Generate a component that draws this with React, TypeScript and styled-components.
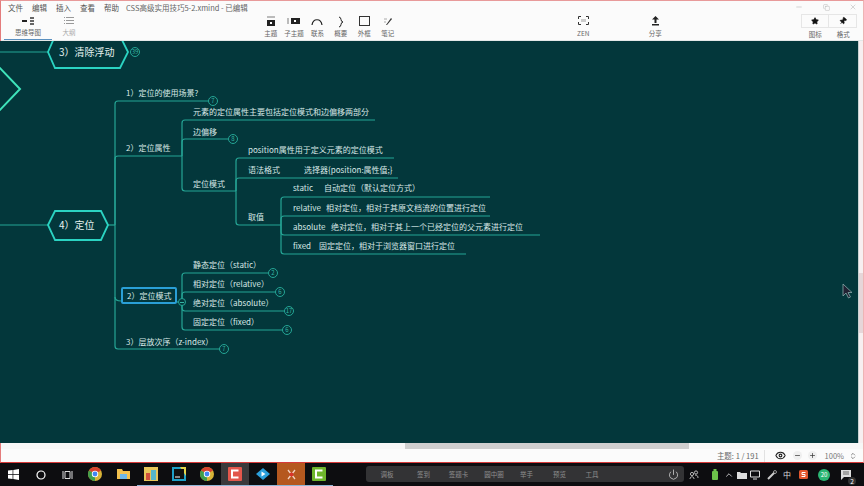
import React from 'react';
import styled, { createGlobalStyle } from 'styled-components';
import { Star, Pin, Eye, Power, ChevronUp, ChevronsUpDown, Minus, Plus, X, Copy } from 'lucide-react';

const CJK = `"Noto Sans CJK SC", "Noto Sans", sans-serif`;
const CANVAS_BG = '#03373b';

const lines = [
  'M0 225H48', 'M0 52H48', 'M108 225H115',
  'M115 225V104Q115 101 118 101H209',
  'M115 225V159Q115 156 118 156H182',
  'M115 225V346Q115 349 118 349H220',
  'M115 297Q115 301 121 301',
  'M182 156V123Q182 120 185 120H375',
  'M182 156V142Q182 139 185 139H228',
  'M182 156V188Q182 191 185 191H236',
  'M236 191V161Q236 158 239 158H394',
  'M236 191V181Q236 178 239 178H398',
  'M236 191V222Q236 225 239 225H281',
  'M281 225V200Q281 197 284 197H490',
  'M281 225V219Q281 216 284 216H490',
  'M281 225V232Q281 235 284 235H540',
  'M281 225V251Q281 254 284 254H466',
  'M177 302H182',
  'M182 302V276Q182 273 185 273H268',
  'M182 302V295Q182 292 185 292H276',
  'M182 302V308Q182 311 185 311H285',
  'M182 302V327Q182 330 185 330H283',
];

const labels = [
  { x: 126, y: 93, text: '1）定位的使用场景?' },
  { x: 126, y: 148, text: '2）定位属性' },
  { x: 126, y: 342, text: '3）层放次序（z-index）' },
  { x: 193, y: 112, text: '元素的定位属性主要包括定位模式和边偏移两部分' },
  { x: 193, y: 132, text: '边偏移' },
  { x: 193, y: 184, text: '定位模式' },
  { x: 248, y: 150, text: 'position属性用于定义元素的定位模式' },
  { x: 248, y: 170, text: '语法格式' },
  { x: 304, y: 170, text: '选择器{position:属性值;}' },
  { x: 248, y: 217, text: '取值' },
  { x: 293, y: 188, text: 'static' },
  { x: 324, y: 188, text: '自动定位（默认定位方式）' },
  { x: 293, y: 208, text: 'relative' },
  { x: 326, y: 208, text: '相对定位，相对于其原文档流的位置进行定位' },
  { x: 293, y: 227, text: 'absolute' },
  { x: 331, y: 227, text: '绝对定位，相对于其上一个已经定位的父元素进行定位' },
  { x: 293, y: 246, text: 'fixed' },
  { x: 319, y: 246, text: '固定定位，相对于浏览器窗口进行定位' },
  { x: 193, y: 265, text: '静态定位（static）' },
  { x: 193, y: 284, text: '相对定位（relative）' },
  { x: 193, y: 303, text: '绝对定位（absolute）' },
  { x: 193, y: 322, text: '固定定位（fixed）' },
];

const badges = [
  { x: 135, y: 52, n: '39' },
  { x: 213, y: 101, n: '7' },
  { x: 233, y: 139, n: '8' },
  { x: 273, y: 273, n: '2' },
  { x: 280, y: 292, n: '6' },
  { x: 289, y: 311, n: '17' },
  { x: 287, y: 330, n: '6' },
  { x: 224, y: 349, n: '7' },
];

const App: React.FC = () => {
  return (
    <>
      <GlobalStyle />
      <Page>
        <Window>
          <MenuBar>
            <MenuItem>文件</MenuItem>
            <MenuItem>编辑</MenuItem>
            <MenuItem>插入</MenuItem>
            <MenuItem>查看</MenuItem>
            <MenuItem>帮助</MenuItem>
            <DocTitle>CSS高级实用技巧5-2.xmind - 已编辑</DocTitle>
            <WindowControls>
              <Minus size={8} strokeWidth={1} />
              <Copy size={7} strokeWidth={1} />
              <X size={8} strokeWidth={1} />
            </WindowControls>
          </MenuBar>

          <Toolbar>
            <ViewTab $active>
              <svg width="14" height="10" viewBox="0 0 14 10">
                <path d="M1 4h5v2H1z" fill="#222" />
                <path d="M9 1h4v2H9zM9 4h4v2H9zM9 7h4v2H9z" fill="#666" />
              </svg>
              思维导图
            </ViewTab>
            <ViewTab>
              <svg width="12" height="10" viewBox="0 0 12 10">
                <path d="M1 1h1v1H1zM1 4h1v1H1zM1 7h1v1H1zM3 1h8v1H3zM3 4h8v1H3zM3 7h8v1H3z" fill="#999" />
              </svg>
              大纲
            </ViewTab>

            <ToolGroup>
              <ToolButton>
                <svg width="12" height="11" viewBox="0 0 12 11">
                  <path d="M2 0h8v2H2z" fill="#bbb" />
                  <path d="M2 4h8v6H2z" fill="#222" />
                  <path d="M5 6h2v2H5z" fill="#fff" />
                </svg>
                主题
              </ToolButton>
              <ToolButton>
                <svg width="14" height="10" viewBox="0 0 14 10">
                  <path d="M0 2h2v6H0z" fill="#bbb" />
                  <path d="M4 2h9v6H4z" fill="#222" />
                  <path d="M7 4h2v2H7z" fill="#fff" />
                </svg>
                子主题
              </ToolButton>
              <ToolButton>
                <svg width="12" height="10" viewBox="0 0 12 10">
                  <path d="M1 9C2 2 10 2 11 9" fill="none" stroke="#222" strokeWidth="1.2" />
                </svg>
                联系
              </ToolButton>
              <ToolButton>
                <svg width="8" height="12" viewBox="0 0 8 12">
                  <path d="M2 1C5 1 3 6 6 6C3 6 5 11 2 11" fill="none" stroke="#222" strokeWidth="1" />
                </svg>
                概要
              </ToolButton>
              <ToolButton>
                <svg width="11" height="10" viewBox="0 0 11 10">
                  <rect x="0.5" y="0.5" width="10" height="9" fill="none" stroke="#333" />
                </svg>
                外框
              </ToolButton>
              <ToolButton>
                <svg width="10" height="10" viewBox="0 0 10 10">
                  <path d="M1 3h3M1 6h2" stroke="#aaa" />
                  <path d="M3 9L8 2l1 1-5 6z" fill="#333" />
                </svg>
                笔记
              </ToolButton>
            </ToolGroup>

            <ZenButton>
              <svg width="11" height="9" viewBox="0 0 11 9">
                <path d="M0.5 3V0.5H3M8 0.5h2.5V3M10.5 6v2.5H8M3 8.5H0.5V6" fill="none" stroke="#333" />
                <rect x="3" y="3" width="5" height="3" fill="#ccc" />
              </svg>
              ZEN
            </ZenButton>
            <ShareButton>
              <svg width="9" height="10" viewBox="0 0 9 10">
                <path d="M4.5 0L8 3.5H5.5V7h-2V3.5H1zM1 8h7v1.5H1z" fill="#222" />
              </svg>
              分享
            </ShareButton>

            <SidePanel>
              <SideButton>
                <SideIcon><Star size={8} fill="#111" color="#111" /></SideIcon>
                <SideLabel>图标</SideLabel>
              </SideButton>
              <SideButton>
                <SideIcon $last><Pin size={8} fill="#111" color="#111" style={{ transform: 'rotate(40deg)' }} /></SideIcon>
                <SideLabel>格式</SideLabel>
              </SideButton>
            </SidePanel>
          </Toolbar>

          <Workspace>
            <Canvas>
              <Connectors viewBox="0 41 858 402" width="858" height="402">
                {lines.map((d) => (
                  <path key={d} d={d} fill="none" stroke="#25a595" strokeWidth="1.2" />
                ))}
                <path d="M-2 66L20 89L-2 112" fill="none" stroke="#3fe3ba" strokeWidth="2" />
                <path d="M48 52L55 36H120L128 52L120 68H55Z" fill={CANVAS_BG} stroke="#2bd3c2" strokeWidth="1.8" />
                <path d="M48 225L55 211H101L108 225L101 240H55Z" fill={CANVAS_BG} stroke="#2bd3c2" strokeWidth="1.8" />
              </Connectors>

              <HexLabel $x={59} $y={52}>3）清除浮动</HexLabel>
              <HexLabel $x={59} $y={225}>4）定位</HexLabel>

              {labels.map((l) => (
                <Label key={l.text} $x={l.x} $y={l.y}>{l.text}</Label>
              ))}
              {badges.map((b) => (
                <Badge key={`${b.x}-${b.y}`} $x={b.x} $y={b.y}>{b.n}</Badge>
              ))}

              <SelectedNode>2）定位模式</SelectedNode>
              <Collapse />
            </Canvas>
            <VerticalScroll>
              <VerticalThumb />
            </VerticalScroll>
          </Workspace>

          <HorizontalScroll>
            <HorizontalThumb />
          </HorizontalScroll>

          <StatusBar>
            <StatusText>主题: 1 / 191</StatusText>
            <StatusDivider />
            <EyeSlot><Eye size={11} color="#222" strokeWidth={2.4} /></EyeSlot>
            <ZoomCircle><Minus size={7} color="#333" strokeWidth={2.4} /></ZoomCircle>
            <ZoomCircle><Plus size={7} color="#333" strokeWidth={2.4} /></ZoomCircle>
            <ZoomValue>100%</ZoomValue>
            <ChevronsUpDown size={8} color="#555" />
          </StatusBar>
        </Window>

        <Taskbar>
          <SystemButton>
            <svg width="11" height="11" viewBox="0 0 11 11">
              <path d="M0 1.6L4.6 1V5.2H0zM5.3 0.9L11 0V5.2H5.3zM0 5.9H4.6V10L0 9.4zM5.3 5.9H11V11L5.3 10.1z" fill="#fff" />
            </svg>
          </SystemButton>
          <SystemButton>
            <svg width="10" height="10" viewBox="0 0 10 10">
              <circle cx="5" cy="5" r="4" fill="none" stroke="#fff" strokeWidth="1.2" />
            </svg>
          </SystemButton>
          <SystemButton>
            <svg width="11" height="10" viewBox="0 0 11 10">
              <path d="M3 1.5h5v7H3zM1 1v8M10 1v8" fill="none" stroke="#ddd" />
            </svg>
          </SystemButton>

          <AppButton><ChromeIcon /></AppButton>
          <AppButton>
            <svg width="13" height="12" viewBox="0 0 13 12">
              <path d="M0 1h5l1 2h7v8H0z" fill="#f2c14e" />
              <path d="M3 6h7v5H3z" fill="#6db7e8" />
            </svg>
          </AppButton>
          <AppButton $running>
            <svg width="14" height="14" viewBox="0 0 14 14">
              <rect width="14" height="14" fill="#e8c65a" />
              <rect x="2" y="6" width="4" height="7" fill="#d0503c" />
              <rect x="7" y="3" width="5" height="10" fill="#55b6c9" />
            </svg>
          </AppButton>
          <AppButton $running>
            <svg width="14" height="14" viewBox="0 0 14 14">
              <path d="M0 0h14v14H0z" fill="#1ea0c8" />
              <path d="M8 0h6v9z" fill="#e4d44a" />
              <rect x="2" y="2" width="10" height="10" fill="#111" />
              <rect x="3" y="9.5" width="5" height="1" fill="#fff" />
            </svg>
          </AppButton>
          <AppButton $running><ChromeIcon /></AppButton>
          <AppButton $running $bg="#3a3a3c">
            <svg width="14" height="14" viewBox="0 0 14 14">
              <rect width="14" height="14" rx="1" fill="#e2574c" />
              <path d="M10.5 3.5H4v7h6.5" fill="none" stroke="#fff" strokeWidth="2" />
            </svg>
          </AppButton>
          <AppButton $running>
            <svg width="14" height="12" viewBox="0 0 14 12">
              <path d="M7 0L14 6L7 12L0 6Z" fill="#2c9fdc" />
              <path d="M5.5 3.5L9.5 6L5.5 8.5Z" fill="#fff" />
            </svg>
          </AppButton>
          <AppButton $running $bg="#b5581f">
            <svg width="11" height="11" viewBox="0 0 11 11">
              <path d="M2 1L9 10M9 1L2 10" stroke="#f3d0c0" strokeWidth="1.3" />
              <circle cx="5.5" cy="5.5" r="2" fill="#d9352c" />
            </svg>
          </AppButton>
          <AppButton $running>
            <svg width="14" height="14" viewBox="0 0 14 14">
              <rect width="14" height="14" rx="1" fill="#6fb52c" />
              <path d="M10.5 3.5H4v7h6.5" fill="none" stroke="#fff" strokeWidth="2" />
            </svg>
          </AppButton>

          <Dock>
            <DockLabel $w={42}>调板</DockLabel>
            <DockLabel $w={31}>签到</DockLabel>
            <DockLabel $w={39}>签题卡</DockLabel>
            <DockLabel $w={32}>圆中圈</DockLabel>
            <DockLabel $w={33}>举手</DockLabel>
            <DockLabel $w={33}>预览</DockLabel>
            <DockLabel $w={32}>工具</DockLabel>
            <DockPower><Power size={11} color="#bbb" /></DockPower>
          </Dock>

          <Tray>
            <TrayIcon $gap={5}>
              <svg width="10" height="10" viewBox="0 0 10 10">
                <circle cx="7" cy="2.5" r="1.6" fill="none" stroke="#ddd" strokeWidth=".8" />
                <circle cx="3" cy="4" r="1.6" fill="none" stroke="#ddd" strokeWidth=".8" />
                <path d="M1 9C1 6 5 6 5 9M6 5C8 5 9 6 9 8" fill="none" stroke="#ddd" strokeWidth=".8" />
              </svg>
            </TrayIcon>
            <TrayIcon $gap={11}>
              <svg width="6" height="11" viewBox="0 0 6 11">
                <rect x="0" y="2" width="6" height="9" rx="1" fill="#6cc24a" />
                <rect x="1.5" y="0" width="3" height="2" fill="#6cc24a" />
              </svg>
            </TrayIcon>
            <TrayIcon $gap={4}><ChevronUp size={10} color="#ddd" /></TrayIcon>
            <TrayIcon $gap={3}>
              <svg width="10" height="8" viewBox="0 0 10 8">
                <path d="M0 1h3l1 1h6v6H0z" fill="#ddd" />
              </svg>
            </TrayIcon>
            <TrayIcon $gap={3}>
              <svg width="10" height="10" viewBox="0 0 10 10">
                <path d="M.5 1h9v6h-9zM3 9h4" fill="none" stroke="#ddd" />
              </svg>
            </TrayIcon>
            <TrayIcon $gap={7}>
              <svg width="10" height="10" viewBox="0 0 10 10">
                <path d="M1 9L8 2" stroke="#ccc" strokeWidth="2" />
                <circle cx="8" cy="2" r="1.5" fill="#111" stroke="#ccc" strokeWidth=".7" />
              </svg>
            </TrayIcon>
            <TrayIcon $gap={5}>中</TrayIcon>
            <TrayIcon $gap={6}>
              <svg width="9" height="9" viewBox="0 0 9 9">
                <rect width="9" height="9" rx="1.5" fill="#e4572e" />
                <path d="M6.5 2.5H3v2h3v2H2.5" fill="none" stroke="#fff" />
              </svg>
            </TrayIcon>
            <SpeedBadge>20</SpeedBadge>
            <TrayIcon $gap={11}>
              <svg width="10" height="10" viewBox="0 0 10 10">
                <path d="M0 0h10v7H3L0 10z" fill="#ddd" />
                <path d="M2 2h6M2 4h6" stroke="#333" strokeWidth=".7" />
              </svg>
              <NoticeCount>2</NoticeCount>
            </TrayIcon>
          </Tray>
        </Taskbar>

        <Cursor width="12" height="16" viewBox="0 0 12 16">
          <path d="M1 1V13L4 10L6.5 15L8.5 14L6 9.5H10Z" fill="#223" stroke="#8aa" strokeWidth=".8" />
        </Cursor>
      </Page>
    </>
  );
};

const ChromeIcon: React.FC = () => (
  <svg width="14" height="14" viewBox="0 0 14 14">
    <circle cx="7" cy="7" r="7" fill="#d8b337" />
    <path d="M7 7L1 3.5A7 7 0 0 1 13 3.5Z" fill="#d8412f" />
    <path d="M7 7L1 3.5A7 7 0 0 0 7 14Z" fill="#3f9e4d" />
    <circle cx="7" cy="7" r="3.2" fill="#fff" />
    <circle cx="7" cy="7" r="2.4" fill="#4285f4" />
  </svg>
);

export default App;

const GlobalStyle = createGlobalStyle`
  html, body {
    margin: 0;
    padding: 0;
    background: #0d0d10;
    overflow: hidden;
  }
`;

const Page = styled.div`
  position: relative;
  width: 864px;
  height: 486px;
  display: flex;
  flex-direction: column;
  font-family: ${CJK};
`;

const Cursor = styled.svg`
  position: absolute;
  left: 842px;
  top: 283px;
`;

const Window = styled.div`
  height: 463px;
  box-sizing: border-box;
  display: flex;
  flex-direction: column;
  background: #fbfbfb;
  border-top: 1px solid #e89a9a;
  border-left: 1px solid #e47c7c;
  border-right: 1px solid #eeb4b4;
  border-bottom: 1px solid #d83a3a;
`;

const MenuBar = styled.div`
  height: 12px;
  display: flex;
  align-items: center;
  padding-left: 7px;
  font-size: 7.5px;
  color: #555;
`;

const MenuItem = styled.span`
  width: 24px;
`;

const DocTitle = styled.span`
  margin-left: -2px;
  color: #666;
  font-size: 7.5px;
`;

const WindowControls = styled.div`
  margin-left: auto;
  width: 62px;
  padding-right: 6px;
  display: flex;
  justify-content: space-between;
  align-items: center;
  color: #888;
`;

const Toolbar = styled.div`
  height: 28px;
  display: flex;
  align-items: stretch;
  padding-left: 3px;
  background: #fbfbfb;
  border-bottom: 1px solid #e4e8e8;
  box-sizing: border-box;
`;

const ToolItem = styled.div`
  display: flex;
  flex-direction: column;
  align-items: center;
  justify-content: space-between;
  padding: 3px 0 3px;
  box-sizing: border-box;
  font-size: 6.5px;
  line-height: 8px;
  color: #666;
  white-space: nowrap;
`;

const ViewTab = styled(ToolItem)<{ $active?: boolean }>`
  width: ${(p) => (p.$active ? '48px' : '34px')};
  color: ${(p) => (p.$active ? '#666' : '#aaa')};
  border-bottom: ${(p) => (p.$active ? '1px solid #5a90c0' : '1px solid transparent')};
`;

const ToolGroup = styled.div`
  margin-left: 173px;
  display: flex;
`;

const ToolButton = styled(ToolItem)`
  width: 23.4px;
`;

const ZenButton = styled(ToolItem)`
  width: 30px;
  margin-left: 169px;
`;

const ShareButton = styled(ToolItem)`
  width: 30px;
  margin-left: 42px;
`;

const SidePanel = styled.div`
  margin-left: 131px;
  display: flex;
`;

const SideButton = styled.div`
  width: 28px;
  display: flex;
  flex-direction: column;
  align-items: center;
`;

const SideIcon = styled.div<{ $last?: boolean }>`
  width: 28px;
  height: 14px;
  margin-top: 1px;
  box-sizing: border-box;
  display: flex;
  align-items: center;
  justify-content: center;
  border: 1px solid #e6e6e6;
  border-left: ${(p) => (p.$last ? 'none' : '1px solid #e6e6e6')};
`;

const SideLabel = styled.span`
  margin-top: 2px;
  font-size: 6.5px;
  line-height: 8px;
  color: #666;
  width: 28px;
  text-align: center;
`;

const Workspace = styled.div`
  height: 402px;
  display: flex;
`;

const Canvas = styled.div`
  position: relative;
  width: 858px;
  height: 402px;
  margin-left: -1px;
  overflow: hidden;
  background: ${CANVAS_BG};
`;

const Connectors = styled.svg`
  position: absolute;
  left: 0;
  top: 0;
`;

const Label = styled.div<{ $x: number; $y: number }>`
  position: absolute;
  left: ${(p) => p.$x}px;
  top: ${(p) => p.$y - 47}px;
  font-size: 8px;
  line-height: 12px;
  color: #d8e8e6;
  white-space: nowrap;
`;

const HexLabel = styled.div<{ $x: number; $y: number }>`
  position: absolute;
  left: ${(p) => p.$x}px;
  top: ${(p) => p.$y - 48}px;
  font-size: 10px;
  line-height: 14px;
  color: #e6f2f0;
  white-space: nowrap;
`;

const Badge = styled.div<{ $x: number; $y: number }>`
  position: absolute;
  left: ${(p) => p.$x - 5}px;
  top: ${(p) => p.$y - 46}px;
  width: 10px;
  height: 10px;
  box-sizing: border-box;
  border: 1px solid #25a595;
  border-radius: 50%;
  background: ${CANVAS_BG};
  color: #35b5a4;
  font-size: 6px;
  line-height: 8px;
  text-align: center;
`;

const SelectedNode = styled.div`
  position: absolute;
  left: 121px;
  top: 246px;
  width: 56px;
  height: 17px;
  box-sizing: border-box;
  border: 2px solid #2a9fd6;
  border-radius: 2px;
  background: ${CANVAS_BG};
  padding-left: 4px;
  font-size: 8px;
  line-height: 13px;
  color: #d8e8e6;
  white-space: nowrap;
`;

const Collapse = styled.div`
  position: absolute;
  left: 178px;
  top: 257px;
  width: 8px;
  height: 8px;
  box-sizing: border-box;
  border: 1px solid #25a595;
  border-radius: 50%;
  background: ${CANVAS_BG};

  &::after {
    content: '';
    position: absolute;
    left: 1px;
    right: 1px;
    top: 2.5px;
    height: 1px;
    background: #35b5a4;
  }
`;

const VerticalScroll = styled.div`
  flex: 1;
  background: #f7eff1;
  border-left: 1px solid #c9d2d2;
  padding-top: 232px;
`;

const VerticalThumb = styled.div`
  height: 60px;
  background: #e6d6d9;
`;

const HorizontalScroll = styled.div`
  height: 6px;
  background: #f7f7f7;
  padding-left: 404px;
`;

const HorizontalThumb = styled.div`
  width: 284px;
  height: 6px;
  background: #cfcfcf;
`;

const StatusBar = styled.div`
  flex: 1;
  display: flex;
  align-items: center;
  justify-content: flex-end;
  gap: 5px;
  padding-right: 6px;
  background: #fbfbfb;
`;

const StatusText = styled.span`
  font-size: 7.5px;
  color: #666;
`;

const StatusDivider = styled.span`
  width: 1px;
  height: 12px;
  background: #e2e2e2;
`;

const EyeSlot = styled.span`
  display: flex;
  margin: 0 1px 0 5px;
`;

const ZoomCircle = styled.span`
  width: 9px;
  height: 9px;
  margin-left: 1px;
  border-radius: 50%;
  background: #efefef;
  display: flex;
  align-items: center;
  justify-content: center;
`;

const ZoomValue = styled.span`
  margin-left: 3px;
  font-size: 7.5px;
  color: #777;
`;

const Taskbar = styled.div`
  height: 23px;
  display: flex;
  align-items: stretch;
  background: #0d0d10;
`;

const SystemButton = styled.div`
  width: 27px;
  display: flex;
  align-items: center;
  justify-content: center;
`;

const AppButton = styled.div<{ $running?: boolean; $bg?: string }>`
  width: 28px;
  box-sizing: border-box;
  display: flex;
  align-items: center;
  justify-content: center;
  background: ${(p) => p.$bg || 'transparent'};
  border-bottom: 1px solid ${(p) => (p.$running ? '#8fb6d8' : 'transparent')};
`;

const Dock = styled.div`
  width: 318px;
  margin: 3px 0 4px 33px;
  display: flex;
  align-items: center;
  background: #333335;
  border-radius: 3px;
`;

const DockLabel = styled.span<{ $w: number }>`
  width: ${(p) => p.$w}px;
  text-align: center;
  font-size: 6.5px;
  color: #8d8d8d;
  white-space: nowrap;
`;

const DockPower = styled.span`
  margin-left: auto;
  margin-right: 5px;
  display: flex;
`;

const Tray = styled.div`
  display: flex;
  align-items: center;
`;

const TrayIcon = styled.div<{ $gap: number }>`
  position: relative;
  width: 10px;
  margin-left: ${(p) => p.$gap}px;
  display: flex;
  align-items: center;
  justify-content: center;
  color: #ddd;
  font-size: 8px;
`;

const SpeedBadge = styled.div`
  margin-left: 10px;
  width: 12px;
  height: 12px;
  border-radius: 50%;
  background: #2bb673;
  color: #fff;
  font-size: 6px;
  line-height: 12px;
  text-align: center;
`;

const NoticeCount = styled.span`
  position: absolute;
  right: -5px;
  bottom: -5px;
  width: 8px;
  height: 8px;
  border-radius: 50%;
  background: #333;
  color: #fff;
  font-size: 6.5px;
  line-height: 8px;
  text-align: center;
`;
